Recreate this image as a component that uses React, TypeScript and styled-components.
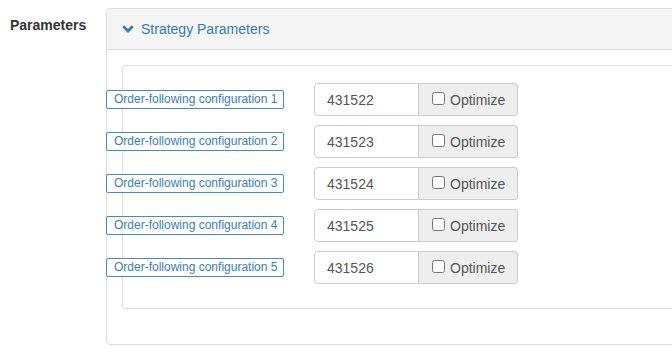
import styled, { createGlobalStyle } from "styled-components";

const GlobalStyle = createGlobalStyle`
    html, body {
        margin: 0;
        padding: 0;
        background: #fff;
        overflow: hidden;
    }
    body {
        font-family: "Liberation Sans", Arial, Helvetica, sans-serif;
        font-size: 14px;
        color: #333;
    }
`;

const Page = styled.div`
    display: flex;
    align-items: flex-start;
    padding-top: 8px;
    width: 800px;
`;

const FieldLabel = styled.div`
    width: 96px;
    padding: 7px 0 0 10px;
    font-weight: bold;
    font-size: 14px;
    line-height: 20px;
    color: #333;
`;

const Panel = styled.div`
    width: 640px;
    border: 1px solid #ddd;
    border-radius: 4px;
    background: #fff;
`;

const PanelHeading = styled.div`
    display: flex;
    align-items: center;
    height: 40px;
    padding: 0 15px;
    background: #f5f5f5;
    border-bottom: 1px solid #ddd;
    border-radius: 3px 3px 0 0;
    color: #337ab7;
    font-size: 14px;
`;

const Chevron = styled.svg`
    width: 12px;
    height: 9px;
    margin-right: 7px;
    margin-top: 0px;
`;

const PanelBody = styled.div`
    padding: 15px 0 35px 15px;
`;

const Fieldset = styled.div`
    border: 1px solid #ddd;
    border-right: none;
    border-radius: 4px 0 0 4px;
    padding: 17px 0 24px 0;
    display: flex;
    flex-direction: column;
    gap: 9px;
`;

const Row = styled.div`
    display: flex;
    align-items: center;
`;

const ParamLabel = styled.span`
    box-sizing: border-box;
    width: 178px;
    margin-left: -17px;
    padding: 1px 7px;
    border: 1px solid #428bca;
    border-radius: 2px;
    background: #fff;
    color: #3a7cc4;
    font-size: 12px;
    line-height: 15px;
    white-space: nowrap;
`;

const InputGroup = styled.div`
    display: flex;
    margin-left: 30px;
    height: 33px;
`;

const ValueInput = styled.div`
    box-sizing: border-box;
    width: 105px;
    padding: 0 12px;
    display: flex;
    align-items: center;
    border: 1px solid #ccc;
    border-radius: 4px 0 0 4px;
    color: #555;
    font-size: 14px;
    background: #fff;
`;

const Addon = styled.label`
    box-sizing: border-box;
    width: 99px;
    display: flex;
    align-items: center;
    padding: 0 0 0 13px;
    border: 1px solid #ccc;
    border-left: none;
    border-radius: 0 4px 4px 0;
    background: #eee;
    color: #555;
    font-size: 14px;
`;

const Check = styled.input`
    width: 13px;
    height: 13px;
    margin: -3px 5px 0 0;
`;

const configs = [
    { name: "Order-following configuration 1", value: "431522" },
    { name: "Order-following configuration 2", value: "431523" },
    { name: "Order-following configuration 3", value: "431524" },
    { name: "Order-following configuration 4", value: "431525" },
    { name: "Order-following configuration 5", value: "431526" },
];

export default function App() {
    return (
        <>
            <GlobalStyle />
            <Page>
                <FieldLabel>Parameters</FieldLabel>
                <Panel>
                    <PanelHeading>
                        <Chevron viewBox="0 0 12 9">
                            <path d="M0.3 2.2 L2.2 0.3 L6 4.1 L9.8 0.3 L11.7 2.2 L6 7.9 Z" fill="#337ab7" />
                        </Chevron>
                        Strategy Parameters
                    </PanelHeading>
                    <PanelBody>
                        <Fieldset>
                            {configs.map((c) => (
                                <Row key={c.value}>
                                    <ParamLabel>{c.name}</ParamLabel>
                                    <InputGroup>
                                        <ValueInput>{c.value}</ValueInput>
                                        <Addon>
                                            <Check type="checkbox" />
                                            Optimize
                                        </Addon>
                                    </InputGroup>
                                </Row>
                            ))}
                        </Fieldset>
                    </PanelBody>
                </Panel>
            </Page>
        </>
    );
}
